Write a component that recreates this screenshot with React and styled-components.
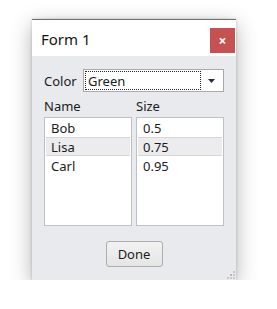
import React from "react";
import styled, { createGlobalStyle } from "styled-components";

const Global = createGlobalStyle`
  html, body { margin: 0; padding: 0; background: #ffffff; }
  body { font-family: "Noto Sans", "Open Sans", sans-serif; color: #1b1b1b; }
`;

const Page = styled.div`
  padding: 19px 0 0 32px;
`;

const Window = styled.div`
  width: 204px;
  border-top: 1px solid #6f6f6f;
  box-shadow: 0 6px 20px rgba(0, 0, 0, 0.3), 0 0 3px rgba(0, 0, 0, 0.18);
  position: relative;
`;

const TitleBar = styled.div`
  height: 36px;
  background: #ffffff;
  display: flex;
  justify-content: space-between;
  align-items: flex-start;
`;

const Title = styled.div`
  font-size: 15px;
  line-height: 20px;
  padding: 9px 0 0 9px;
  color: #141414;
`;

const CloseButton = styled.div`
  width: 25px;
  height: 25px;
  margin: 8px 1px 0 0;
  background: #c75050;
  color: #ffffff;
  font-size: 14px;
  font-weight: 700;
  display: flex;
  align-items: center;
  justify-content: center;
  line-height: 1;
`;

const Body = styled.div`
  background: #e9eaed;
  height: 224px;
  padding: 13px 12px 0 12px;
  box-sizing: border-box;
  display: flex;
  flex-direction: column;
  font-size: 13px;
`;

const ColorRow = styled.div`
  display: flex;
  align-items: center;
  height: 23px;
`;

const Label = styled.span`
  width: 39px;
  font-size: 13px;
`;

const Select = styled.div`
  flex: 1;
  height: 23px;
  box-sizing: border-box;
  background: #ffffff;
  border: 1px solid #a9a9ad;
  display: flex;
  align-items: stretch;
  padding: 1px;
`;

const Focus = styled.div`
  flex: 1;
  border: 1px dotted #222;
  display: flex;
  align-items: center;
  padding-left: 2px;
  font-size: 13px;
`;

const Arrow = styled.div`
  width: 21px;
  display: flex;
  align-items: center;
  justify-content: center;
`;

const Columns = styled.div`
  display: grid;
  grid-template-columns: 88px 88px;
  column-gap: 4px;
  margin-top: 4px;
`;

const Column = styled.div`
  display: flex;
  flex-direction: column;
`;

const Header = styled.div`
  height: 21px;
  line-height: 21px;
`;

const List = styled.div`
  height: 109px;
  box-sizing: border-box;
  border: 1px solid #bfc0c4;
  background: #ffffff;
  display: flex;
  flex-direction: column;
`;

const Item = styled.div`
  height: 19px;
  line-height: 18px;
  padding-left: 5px;
  font-size: 13px;
  box-sizing: border-box;
  background: ${(p) => (p.$selected ? "#ececee" : "transparent")};
  border-top: 1px solid ${(p) => (p.$selected ? "#d6d6d9" : "transparent")};
  border-bottom: 1px solid ${(p) => (p.$selected ? "#d6d6d9" : "transparent")};
  margin: 0 1px;
`;

const Footer = styled.div`
  display: flex;
  justify-content: center;
  margin-top: 15px;
`;

const Button = styled.div`
  width: 57px;
  height: 26px;
  box-sizing: border-box;
  border: 1px solid #adadad;
  border-radius: 3px;
  background: linear-gradient(#f2f2f2, #e5e5e5);
  display: flex;
  align-items: center;
  justify-content: center;
  font-size: 13px;
  color: #1b1b1b;
`;

const Grip = styled.svg`
  position: absolute;
  right: 1px;
  bottom: 1px;
`;

const names = ["Bob", "Lisa", "Carl"];
const sizes = ["0.5", "0.75", "0.95"];

export default function App() {
  return (
    <>
      <Global />
      <Page>
        <Window>
          <TitleBar>
            <Title>Form 1</Title>
            <CloseButton>×</CloseButton>
          </TitleBar>
          <Body>
            <ColorRow>
              <Label>Color</Label>
              <Select>
                <Focus>Green</Focus>
                <Arrow>
                  <svg width="7" height="4" viewBox="0 0 7 4">
                    <path d="M0 0H7L3.5 4Z" fill="#2a2a3a" />
                  </svg>
                </Arrow>
              </Select>
            </ColorRow>
            <Columns>
              <Column>
                <Header>Name</Header>
                <List>
                  {names.map((n, i) => (
                    <Item key={n} $selected={i === 1}>{n}</Item>
                  ))}
                </List>
              </Column>
              <Column>
                <Header>Size</Header>
                <List>
                  {sizes.map((n, i) => (
                    <Item key={n} $selected={i === 1}>{n}</Item>
                  ))}
                </List>
              </Column>
            </Columns>
            <Footer>
              <Button>Done</Button>
            </Footer>
          </Body>
          <Grip width="8" height="8" viewBox="0 0 8 8">
            <rect x="6" y="0" width="2" height="2" fill="#c8c8cc" />
            <rect x="3" y="3" width="2" height="2" fill="#b8b8bc" />
            <rect x="6" y="3" width="2" height="2" fill="#c8c8cc" />
            <rect x="0" y="6" width="2" height="2" fill="#c8c8cc" />
            <rect x="3" y="6" width="2" height="2" fill="#c8c8cc" />
            <rect x="6" y="6" width="2" height="2" fill="#c8c8cc" />
          </Grip>
        </Window>
      </Page>
    </>
  );
}
